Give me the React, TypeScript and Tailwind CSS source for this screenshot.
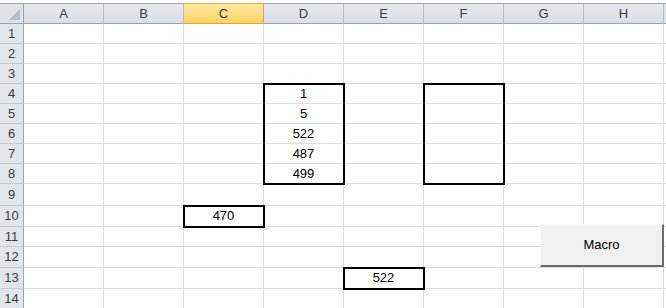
import React from "react";

const COLS = ["A", "B", "C", "D", "E", "F", "G", "H"];
const ROWS = Array.from({ length: 14 }, (_, i) => i + 1);

const VALUES: Record<string, string> = {
  D4: "1",
  D5: "5",
  D6: "522",
  D7: "487",
  D8: "499",
  C10: "470",
  E13: "522",
};

const font = { fontFamily: '"Liberation Sans", Arial, sans-serif' };

const TEMPLATE =
  "grid grid-cols-[24px_repeat(8,80px)_1fr] grid-rows-[21px_repeat(8,20px)_22px_21px_20px_21px_21px_20px]";

export default function App() {
  return (
    <div className="w-[666px] h-[308px] overflow-hidden bg-white relative" style={font}>
      <div className="h-[3px] bg-white" />

      <div className="grid">
        {/* cells */}
        <div className={`${TEMPLATE} [grid-area:1/1]`}>
          {/* corner */}
          <div className="border-t border-r border-b border-[#9ba3ad] bg-[#dfe3e8] flex items-end justify-end p-[3px]">
            <svg width="11" height="11" viewBox="0 0 11 11">
              <polygon points="11,0 11,11 0,11" fill="#b8bec6" />
            </svg>
          </div>

          {/* column headers */}
          {COLS.map((c) =>
            c === "C" ? (
              <div
                key={c}
                className="border-t border-b border-r border-[#e2a53c] bg-gradient-to-b from-[#fde7a2] to-[#fed45f] flex items-center justify-center text-[13px] text-[#3b3b3b]"
              >
                {c}
              </div>
            ) : (
              <div
                key={c}
                className="border-t border-b border-r border-t-[#9ba3ad] border-b-[#9ba3ad] border-r-[#b4bbc3] bg-gradient-to-b from-[#e4e7eb] to-[#dcdfe4] flex items-center justify-center text-[13px] text-[#3b3b3b]"
              >
                {c}
              </div>
            )
          )}
          <div className="border-t border-b border-[#9ba3ad] bg-[#dfe3e8]" />

          {/* rows */}
          {ROWS.map((r) => (
            <React.Fragment key={r}>
              <div className="border-r border-b border-r-[#9ba3ad] border-b-[#c4cad1] bg-[#e2e6eb] flex items-center justify-center text-[13px] text-[#3b3b3b]">
                {r}
              </div>
              {COLS.map((c) => (
                <div
                  key={c}
                  className="border-r border-b border-[#dadcdd] flex items-center justify-center text-[13px] text-black"
                >
                  {VALUES[`${c}${r}`] ?? ""}
                </div>
              ))}
              <div className="border-b border-[#dadcdd]" />
            </React.Fragment>
          ))}
        </div>

        {/* range borders, same grid laid over the cells */}
        <div className={`${TEMPLATE} [grid-area:1/1] pointer-events-none`}>
          <div className="col-start-5 row-start-5 row-span-5 -m-px border-2 border-black" />
          <div className="col-start-7 row-start-5 row-span-5 -m-px border-2 border-black" />
          <div className="col-start-4 row-start-11 -m-px border-2 border-black" />
          <div className="col-start-6 row-start-14 -m-px border-2 border-black" />
        </div>
      </div>

      {/* form button */}
      <button className="absolute left-[540px] top-[224px] w-[124px] h-[43px] bg-[#f0f0f0] border-t border-l border-t-[#f7f7f7] border-l-[#f7f7f7] border-r-2 border-b-2 border-r-[#6b6b6b] border-b-[#6b6b6b] text-[13px] text-black flex items-center justify-center">
        Macro
      </button>
    </div>
  );
}
